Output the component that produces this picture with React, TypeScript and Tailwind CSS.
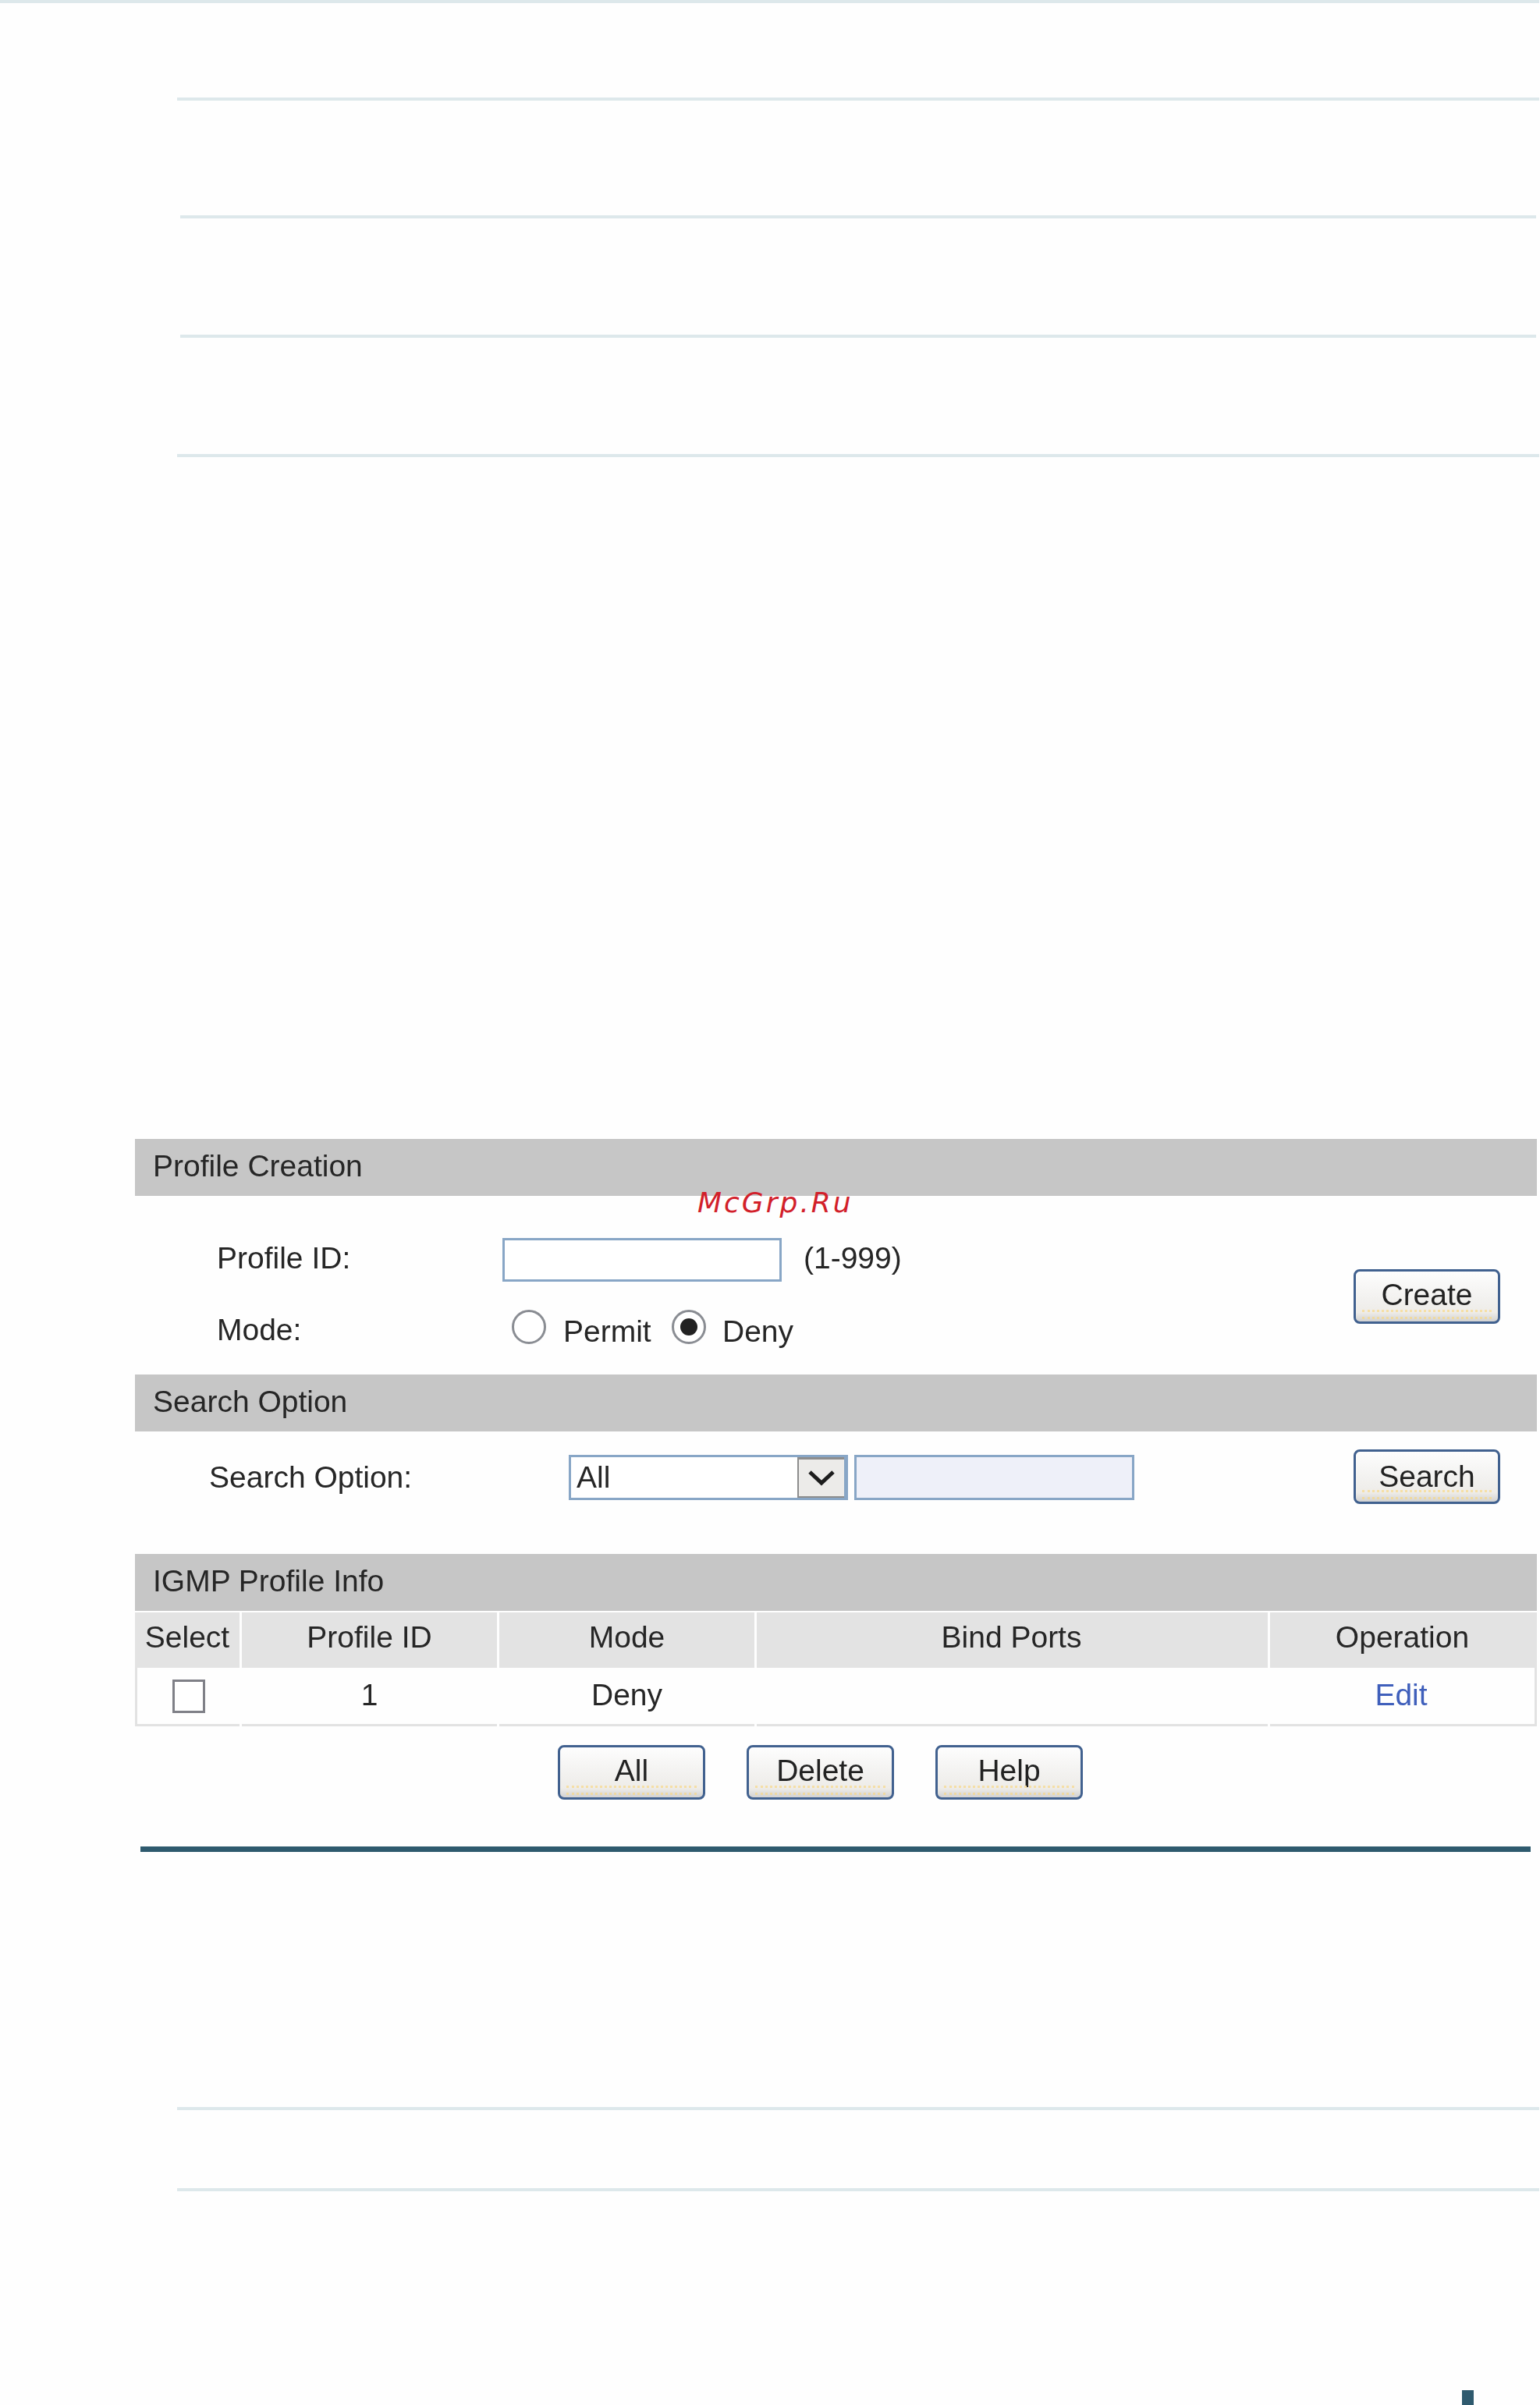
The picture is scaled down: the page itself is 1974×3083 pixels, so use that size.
import React from "react";

const Rule = ({ className }: { className: string }) => (
  <div className={`shrink-0 bg-[#dde8eb] ${className}`} />
);

const SectionBar = ({ title }: { title: string }) => (
  <div className="flex h-[73px] items-center bg-[#c6c6c6] pb-[2px] pl-[23px]">{title}</div>
);

const Button = ({ label, className = "" }: { label: string; className?: string }) => (
  <button className={`relative flex h-[70px] w-[188px] shrink-0 items-center justify-center rounded-[8px] border-[3px] border-[#41618f] bg-[linear-gradient(180deg,#fdfdfd_0%,#f2f1ef_55%,#eeece8_82%,#d2d2d2_100%)] text-[#222] ${className}`}>
    {label}
    {/* dotted yellow specks along the bottom of the button */}
    <span className="absolute right-[8px] bottom-[12px] left-[8px] border-b-[3px] border-dotted border-[#f5dfa6]" />
    <span className="absolute right-[8px] bottom-[3px] left-[8px] border-b-[3px] border-dotted border-[#efd9a0]" />
  </button>
);

const Radio = ({ checked = false }: { checked?: boolean }) => (
  <span className="flex h-[44px] w-[44px] shrink-0 items-center justify-center rounded-full border-[3px] border-[#8a8d93] bg-white">
    {checked && <span className="h-[22px] w-[22px] rounded-full bg-[#222]" />}
  </span>
);

const COLS = "grid grid-cols-[134px_327px_327px_655px_342px] gap-x-[3px]";

export default function App() {
  const heads = ["Select", "Profile ID", "Mode", "Bind Ports", "Operation"];

  return (
    <div className="relative flex h-[3083px] w-full flex-col overflow-hidden bg-[#fefefe] font-['Liberation_Sans',Arial,sans-serif] text-[39px] text-[#262626]">
      <Rule className="h-[4px] w-[1973px]" />
      <Rule className="mt-[121px] ml-[227px] h-[4px] w-[1746px]" />
      <Rule className="mt-[147px] ml-[231px] h-[4px] w-[1738px]" />
      <Rule className="mt-[149px] ml-[231px] h-[4px] w-[1738px]" />
      <Rule className="mt-[149px] ml-[227px] h-[4px] w-[1746px]" />

      <div className="mt-[874px] ml-[173px] w-[1797px] shrink-0 blur-[0.6px]">
        <SectionBar title="Profile Creation" />
        <div className="flex h-[229px]">
          <div className="flex flex-col pt-[54px] pl-[105px]">
            <div className="flex h-[56px] items-center">
              <span className="w-[366px] pb-[4px]">Profile ID:</span>
              <input readOnly className="h-[56px] w-[358px] border-[3px] border-[#88a6c6] bg-white" />
              <span className="ml-[28px] pb-[4px]">(1-999)</span>
            </div>
            <div className="mt-[36px] flex h-[44px] items-center">
              <span className="w-[378px] pt-[8px]">Mode:</span>
              <Radio />
              <span className="ml-[22px] w-[114px] pt-[12px]">Permit</span>
              <span className="ml-[25px]"><Radio checked /></span>
              <span className="ml-[21px] pt-[12px]">Deny</span>
            </div>
          </div>
          <Button label="Create" className="mt-[94px] mr-[47px] ml-auto pb-[4px]" />
        </div>

        <SectionBar title="Search Option" />
        <div className="flex h-[157px]">
          <div className="flex pt-[30px] pl-[95px]">
            <span className="flex h-[58px] w-[461px] items-center">Search Option:</span>
            <div className="flex h-[58px] w-[358px] items-stretch border-[3px] border-r-[5px] border-[#88a6c6] bg-white">
              <span className="flex flex-1 items-center pl-[7px]">All</span>
              <span className="flex w-[60px] items-center justify-center border-2 border-t-[3px] border-r-0 border-[#8d8d8d] bg-[#ecebe9]">
                <svg width="34" height="20" viewBox="0 0 34 20" fill="none" stroke="#1d1d1d" strokeWidth="5">
                  <path d="M2 2 L17 16 L32 2" />
                </svg>
              </span>
            </div>
            <input readOnly className="ml-[8px] h-[58px] w-[359px] border-[3px] border-[#88a6c6] bg-[#eef0f9]" />
          </div>
          <Button label="Search" className="mt-[23px] mr-[47px] ml-auto" />
        </div>

        <SectionBar title="IGMP Profile Info" />
        <div className={`${COLS} mt-[2px]`}>
          {heads.map((h, i) => (
            <div
              key={h}
              className={`flex h-[71px] items-center justify-center bg-[#e3e3e3] pb-[6px] ${i === 4 ? "pr-[3px]" : i === 3 ? "pr-[2px]" : ""}`}
            >
              {h}
            </div>
          ))}
        </div>
        <div className={COLS}>
          <div className="flex h-[75px] items-center justify-center border-b-[3px] border-l-[3px] border-[#e2e2e2]">
            <span className="h-[43px] w-[42px] border-[3px] border-[#7f8087] bg-white" />
          </div>
          <div className="flex h-[75px] items-center justify-center border-b-[3px] border-[#e2e2e2] pb-[2px]">1</div>
          <div className="flex h-[75px] items-center justify-center border-b-[3px] border-[#e2e2e2] pb-[2px]">Deny</div>
          <div className="h-[75px] border-b-[3px] border-[#e2e2e2]" />
          <div className="flex h-[75px] items-center justify-center border-r-[3px] border-b-[3px] border-[#e2e2e2] pr-[3px] pb-[2px] text-[#3f5fbb]">
            Edit
          </div>
        </div>

        <div className="mt-[24px] flex gap-[53px] pl-[542px]">
          <Button label="All" className="w-[189px] pb-[4px]" />
          <Button label="Delete" className="w-[189px] pb-[4px]" />
          <Button label="Help" className="w-[189px] pb-[4px]" />
        </div>
      </div>

      <div className="mt-[60px] ml-[180px] h-[7px] w-[1782px] shrink-0 bg-[#2e5a6e]" />
      <Rule className="mt-[327px] ml-[227px] h-[4px] w-[1746px]" />
      <Rule className="mt-[100px] ml-[227px] h-[4px] w-[1746px]" />
      <div className="mt-[255px] ml-[1874px] h-[19px] w-[15px] shrink-0 bg-[#2f5a6e]" />

      {/* watermark sitting over the form */}
      <span className="absolute top-[1518px] left-[894px] font-['DejaVu_Sans',sans-serif] text-[36px] leading-[48px] tracking-[3px] text-[#d2202a] italic">
        McGrp.Ru
      </span>
    </div>
  );
}
